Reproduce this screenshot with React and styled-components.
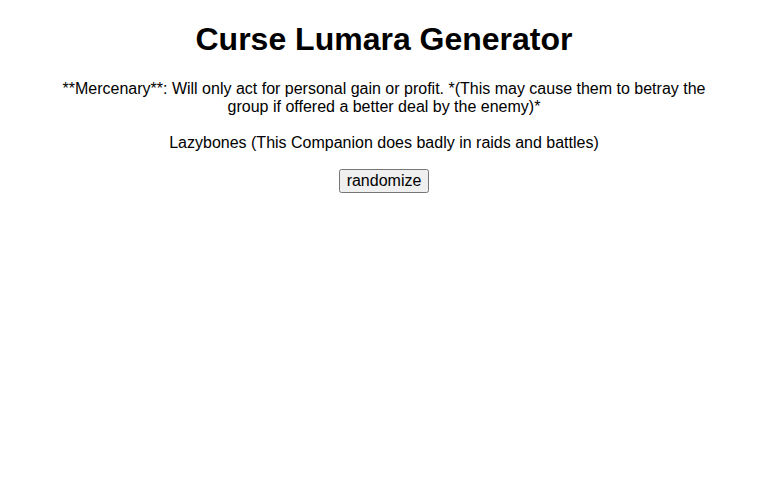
import React, { useState } from "react";
import styled, { createGlobalStyle } from "styled-components";

const GlobalStyle = createGlobalStyle`
  html, body {
    margin: 0;
    padding: 0;
    background: #ffffff;
  }
  body {
    font-family: "Liberation Sans", Arial, sans-serif;
    color: #000000;
  }
`;

const Page = styled.main`
  display: flex;
  flex-direction: column;
  align-items: center;
  text-align: center;
`;

const Title = styled.h1`
  font-size: 32px;
  font-weight: bold;
  margin: 21.44px 0;
`;

/* Result block: each rolled line is separated by one blank text line */
const Result = styled.div`
  max-width: 666px;
  display: flex;
  flex-direction: column;
  gap: 18.4px;
  margin-bottom: 16px;
  font-size: 16px;
`;

const Line = styled.div`
  margin: 0;
`;

const RandomizeButton = styled.button`
  font-family: "Liberation Sans", Arial, sans-serif;
  font-size: 16px;
  margin-top: 0.5px;
`;

const traits = [
  "**Mercenary**: Will only act for personal gain or profit. *(This may cause them to betray the group if offered a better deal by the enemy)*",
];

const flaws = ["Lazybones (This Companion does badly in raids and battles)"];

export default function App() {
  const [trait, setTrait] = useState(traits[0]);
  const [flaw, setFlaw] = useState(flaws[0]);

  const randomize = () => {
    setTrait(traits[Math.floor(Math.random() * traits.length)]);
    setFlaw(flaws[Math.floor(Math.random() * flaws.length)]);
  };

  return (
    <>
      <GlobalStyle />
      <Page>
        <Title>Curse Lumara Generator</Title>
        <Result>
          <Line>{trait}</Line>
          <Line>{flaw}</Line>
        </Result>
        <RandomizeButton onClick={randomize}>randomize</RandomizeButton>
      </Page>
    </>
  );
}
